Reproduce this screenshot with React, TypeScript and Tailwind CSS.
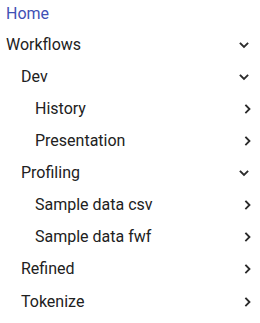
type Item = { label: string; level: number; icon: 'down' | 'right' };

const items: Item[] = [
  { label: 'Workflows', level: 0, icon: 'down' },
  { label: 'Dev', level: 1, icon: 'down' },
  { label: 'History', level: 2, icon: 'right' },
  { label: 'Presentation', level: 2, icon: 'right' },
  { label: 'Profiling', level: 1, icon: 'down' },
  { label: 'Sample data csv', level: 2, icon: 'right' },
  { label: 'Sample data fwf', level: 2, icon: 'right' },
  { label: 'Refined', level: 1, icon: 'right' },
  { label: 'Tokenize', level: 1, icon: 'right' },
];

const indent = ['pl-[6px]', 'pl-[21px]', 'pl-[35px]'];

function Chevron({ dir }: { dir: 'down' | 'right' }) {
  return (
    <svg width="16" height="16" viewBox="0 0 16 16" fill="none" stroke="#2b2b2b" strokeWidth={1.8} strokeLinecap="square">
      {dir === 'down' ? (
        <path d="M4.5 6.5L8 10L11.5 6.5" />
      ) : (
        <path d="M10 4.5L13.5 8L10 11.5" />
      )}
    </svg>
  );
}

export default function App() {
  return (
    <div className="w-[260px] h-[323px] bg-white font-['Roboto',sans-serif] text-[16px] text-[#212121]">
      <div className="h-[28.5px] flex items-center pl-[6px] text-[#3f51b5]">Home</div>
      {items.map((item) => (
        <div key={item.label} className={`h-[32.125px] flex items-center justify-between pr-[8px] ${indent[item.level]}`}>
          <span>{item.label}</span>
          <Chevron dir={item.icon} />
        </div>
      ))}
    </div>
  );
}
